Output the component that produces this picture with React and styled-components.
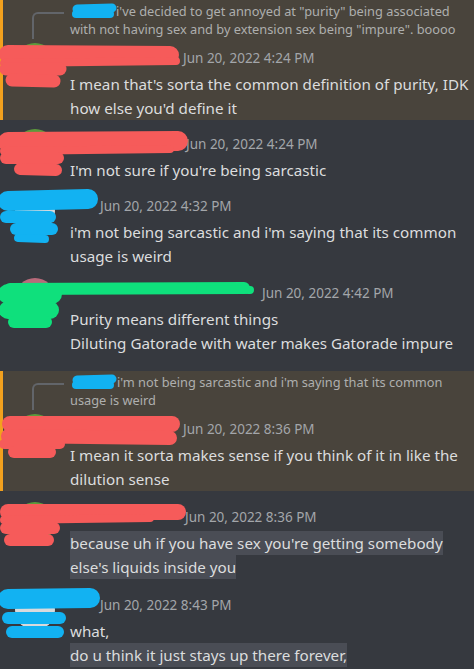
import React from "react";
import styled, { createGlobalStyle } from "styled-components";

const GlobalStyle = createGlobalStyle`
  body {
    margin: 0;
    background: #36393f;
    font-family: "Noto Sans", "Open Sans", sans-serif;
  }
`;

const Chat = styled.div`
  display: flex;
  flex-direction: column;
  width: 474px;
  height: 669px;
  overflow: hidden;
  background: #36393f;
`;

const Message = styled.div`
  margin-top: ${props => props.$gap}px;
  padding-top: 2px;
  background: ${props => (props.$mention ? "#49443c" : "transparent")};
  box-shadow: ${props => (props.$mention ? "inset 3px 0 0 #f2a11e" : "none")};
`;

const Reply = styled.div`
  position: relative;
  margin: 0 0 9px 70px;
  font-size: 12.8px;
  line-height: 18px;
  color: #aeafae;
  white-space: nowrap;

  &::before {
    content: "";
    position: absolute;
    left: -38px;
    top: 10px;
    width: 30px;
    height: 25px;
    border-left: 2px solid #62656a;
    border-top: 2px solid #62656a;
    border-top-left-radius: 6px;
  }
`;

const ReplyName = styled.span`
  display: inline-block;
  width: ${props => props.$w}px;
  height: 16px;
  margin-right: 4px;
  vertical-align: -3px;
`;

const Row = styled.div`
  position: relative;
  display: flex;
  align-items: flex-start;
`;

const Gutter = styled.div`
  flex: none;
  width: 70px;
  padding-left: 15px;
  box-sizing: border-box;
`;

const Avatar = styled.div`
  width: 40px;
  height: 40px;
  margin-top: -4px;
  border-radius: 50%;
  background: ${props => props.$color};
`;

const Body = styled.div`
  flex: 1;
  min-width: 0;
`;

const Header = styled.div`
  display: flex;
  align-items: center;
  height: 22px;
  margin-bottom: 3px;
`;

const NameSpace = styled.span`
  flex: none;
  width: ${props => props.$w}px;
`;

const Time = styled.span`
  margin-left: 6px;
  font-size: 13.5px;
  color: #a3a6aa;
  white-space: nowrap;
`;

const Line = styled.div`
  font-size: 15.2px;
  line-height: 24px;
  color: #dcddde;
  white-space: nowrap;
`;

const Selected = styled.span`
  display: inline-block;
  background: #4a4d55;
`;

const Blot = styled.svg`
  position: absolute;
  left: 0;
  top: -8px;
  pointer-events: none;
`;

const RED = "#f65b5a";
const BLUE = "#12b2f2";
const GREEN = "#0fe07c";

const Scribble = ({ color, strokes }) => (
  <Blot width="270" height="64" viewBox="0 0 270 64">
    {strokes.map(([x1, y1, x2, y2, w], i) => (
      <line
        key={i}
        x1={x1}
        y1={y1 + 8}
        x2={x2}
        y2={y2 + 8}
        stroke={color}
        strokeWidth={w}
        strokeLinecap="round"
      />
    ))}
  </Blot>
);

const ReplyBlot = () => (
  <svg width="48" height="16" viewBox="0 0 48 16">
    <line x1="7" y1="6" x2="42" y2="5" stroke={BLUE} strokeWidth="9" strokeLinecap="round" />
    <line x1="6" y1="11" x2="40" y2="11" stroke={BLUE} strokeWidth="8" strokeLinecap="round" />
  </svg>
);

const messages = [
  {
    gap: 0,
    mention: true,
    reply: ["i've decided to get annoyed at \"purity\" being associated", "with not having sex and by extension sex being \"impure\". boooo"],
    replyW: 42,
    avatar: "#5d9a3c",
    color: RED,
    strokes: [[8, 7, 170, 8, 18], [4, 16, 176, 14, 8], [6, 22, 60, 22, 13], [12, 33, 54, 34, 13]],
    nameW: 107,
    time: "Jun 20, 2022 4:24 PM",
    lines: ["I mean that's sorta the common definition of purity, IDK", "how else you'd define it"],
  },
  {
    gap: 11,
    avatar: "#5d9a3c",
    color: RED,
    strokes: [[8, 9, 178, 8, 20], [4, 18, 170, 16, 8], [6, 25, 58, 25, 12], [20, 36, 56, 37, 12]],
    nameW: 110,
    time: "Jun 20, 2022 4:24 PM",
    lines: ["I'm not sure if you're being sarcastic"],
  },
  {
    gap: 11,
    avatar: "#d8dadd",
    color: BLUE,
    strokes: [[8, 6, 88, 4, 20], [6, 22, 50, 22, 12], [16, 34, 52, 34, 12], [18, 43, 45, 44, 8]],
    nameW: 24,
    time: "Jun 20, 2022 4:32 PM",
    lines: ["i'm not being sarcastic and i'm saying that its common", "usage is weird"],
  },
  {
    gap: 12,
    avatar: "#b86a7a",
    color: GREEN,
    strokes: [[10, 7, 244, 6, 12], [200, 7, 250, 8, 8], [8, 12, 52, 12, 20], [8, 28, 50, 28, 18], [14, 40, 46, 40, 12]],
    nameW: 186,
    time: "Jun 20, 2022 4:42 PM",
    lines: ["Purity means different things", "Diluting Gatorade with water makes Gatorade impure"],
  },
  {
    gap: 16,
    mention: true,
    reply: ["i'm not being sarcastic and i'm saying that its common", "usage is weird"],
    replyW: 43,
    avatar: "#5d9a3c",
    color: RED,
    strokes: [[10, 6, 172, 6, 16], [8, 18, 170, 20, 14], [4, 26, 60, 26, 10], [14, 34, 50, 34, 12]],
    nameW: 107,
    time: "Jun 20, 2022 8:36 PM",
    lines: ["I mean it sorta makes sense if you think of it in like the", "dilution sense"],
  },
  {
    gap: 13,
    avatar: "#5d9a3c",
    color: RED,
    strokes: [[8, 6, 178, 6, 16], [4, 14, 150, 12, 8], [6, 22, 54, 22, 12], [10, 34, 48, 34, 12]],
    nameW: 109,
    time: "Jun 20, 2022 8:36 PM",
    lines: ["because uh if you have sex you're getting somebody", "else's liquids inside you"],
    selected: [true, true],
  },
  {
    gap: 13,
    avatar: "#d8dadd",
    color: BLUE,
    strokes: [[8, 5, 90, 4, 20], [8, 24, 60, 24, 12], [12, 38, 58, 38, 12]],
    nameW: 24,
    time: "Jun 20, 2022 8:43 PM",
    lines: ["what,", "do u think it just stays up there forever,"],
    selected: [false, true],
  },
];

const App = () => (
  <>
    <GlobalStyle />
    <Chat>
      {messages.map((m, i) => (
        <Message key={i} $gap={m.gap} $mention={m.mention}>
          {m.reply && (
            <Reply>
              <ReplyName $w={m.replyW}>
                <ReplyBlot />
              </ReplyName>
              {m.reply[0]}
              <br />
              {m.reply[1]}
            </Reply>
          )}
          <Row>
            <Gutter>
              <Avatar $color={m.avatar} />
            </Gutter>
            <Body>
              <Header>
                <NameSpace $w={m.nameW} />
                <Time>{m.time}</Time>
              </Header>
              {m.lines.map((line, j) => (
                <Line key={j}>
                  {m.selected && m.selected[j] ? <Selected>{line}</Selected> : line}
                </Line>
              ))}
            </Body>
            <Scribble color={m.color} strokes={m.strokes} />
          </Row>
        </Message>
      ))}
    </Chat>
  </>
);

export default App;
